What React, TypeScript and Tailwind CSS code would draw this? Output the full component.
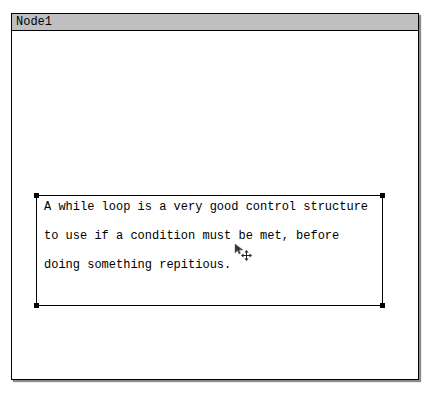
import React from 'react';

const MoveCursor: React.FC = () => (
  <svg
    className="absolute left-[197px] top-[47px]"
    width="20"
    height="18"
    viewBox="0 0 20 18"
  >
    <path d="M1 1 L1 10 L3.5 7.5 L5 11 L6.5 10.3 L5 7 L9 7 Z" fill="#333" stroke="#666" strokeWidth="0.5" />
    <g stroke="#222" strokeWidth="1" fill="none">
      <line x1="12.5" y1="8" x2="12.5" y2="17" />
      <line x1="8" y1="12.5" x2="17" y2="12.5" />
    </g>
    <g fill="#222">
      <path d="M12.5 7 L10.5 9.5 L14.5 9.5 Z" />
      <path d="M12.5 18 L10.5 15.5 L14.5 15.5 Z" />
      <path d="M7 12.5 L9.5 10.5 L9.5 14.5 Z" />
      <path d="M18 12.5 L15.5 10.5 L15.5 14.5 Z" />
    </g>
  </svg>
);

const Handle: React.FC<{ pos: string }> = ({ pos }) => (
  <div className={`absolute w-[5px] h-[5px] bg-black ${pos}`} />
);

export default function App() {
  const lines = [
    'A while loop is a very good control structure',
    'to use if a condition must be met, before',
    'doing something repitious.',
  ];

  return (
    <div className="w-[434px] h-[398px] bg-white pl-[11px] pt-[13px] font-['Liberation_Mono',monospace] text-[12px] text-black">
      <div className="w-[408px] h-[367px] border border-black bg-white shadow-[2px_2px_1px_rgba(0,0,0,0.45)]">
        <div className="h-[17px] bg-[#c0c0c0] border-b border-black pl-[4px] leading-[16px]">
          Node1
        </div>
        <div className="pl-[24px] pt-[164px]">
          <div className="relative w-[347px] h-[111px] border border-black pl-[7px] pt-[4px]">
            {lines.map((l) => (
              <div key={l} className="leading-[14px] mb-[15px] whitespace-pre">
                {l}
              </div>
            ))}
            <Handle pos="-left-[3px] -top-[3px]" />
            <Handle pos="-right-[3px] -top-[3px]" />
            <Handle pos="-left-[3px] -bottom-[3px]" />
            <Handle pos="-right-[3px] -bottom-[3px]" />
            <MoveCursor />
          </div>
        </div>
      </div>
    </div>
  );
}
